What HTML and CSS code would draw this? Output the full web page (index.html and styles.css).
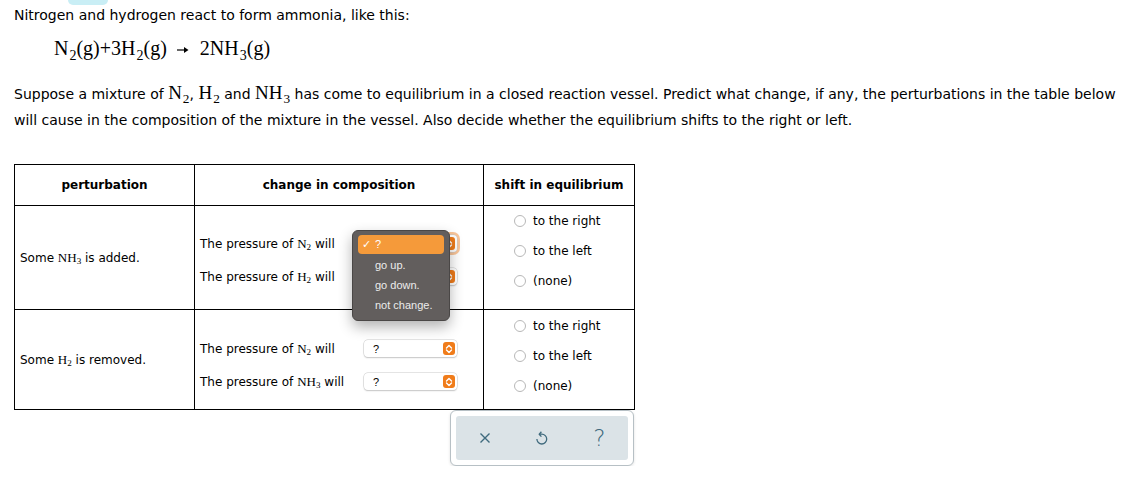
FILE: index.html
```html
<!DOCTYPE html>
<html>
<head>
<meta charset="utf-8">
<link rel="stylesheet" href="styles.css">
</head>
<body>
<div class="page">
  <div class="tab"></div>
  <p class="intro">Nitrogen and hydrogen react to form ammonia, like this:</p>
  <div class="eq">N<sub>2</sub>(g)+3H<sub>2</sub>(g) <svg class="arrow" width="12" height="8" viewBox="0 0 12 8"><path d="M0 4H8" stroke="#000" stroke-width="1.2"/><path d="M7 1L11.5 4L7 7Z" fill="#000"/></svg> 2NH<sub>3</sub>(g)</div>
  <p class="para">Suppose a mixture of <span class="f">N<sub>2</sub></span>, <span class="f">H<sub>2</sub></span> and <span class="f">NH<sub>3</sub></span> has come to equilibrium in a closed reaction vessel. Predict what change, if any, the perturbations in the table below will cause in the composition of the mixture in the vessel. Also decide whether the equilibrium shifts to the right or left.</p>

  <div class="work">
    <table class="grid">
      <colgroup><col class="c1"><col class="c2"><col class="c3"></colgroup>
      <tr class="head">
        <th>perturbation</th>
        <th>change in composition</th>
        <th>shift in equilibrium</th>
      </tr>
      <tr class="r1">
        <td class="pert">Some <span class="fs">NH<sub>3</sub></span> is added.</td>
        <td class="comp">
          <div class="lines">
            <div class="line"><span class="lbl">The pressure of <span class="fs">N<sub>2</sub></span> will</span>
              <span class="selwrap">
                <span class="sel focus"><span class="q">?</span><span class="arr"><svg width="8" height="10" viewBox="0 0 8 10"><path d="M1.5 4L4 1.6L6.5 4M1.5 6L4 8.4L6.5 6" fill="none" stroke="#fff" stroke-width="1.4" stroke-linecap="round" stroke-linejoin="round"/></svg></span></span>
                <span class="menu">
                  <span class="item on"><span class="chk">✓</span>?</span>
                  <span class="item">go up.</span>
                  <span class="item">go down.</span>
                  <span class="item">not change.</span>
                </span>
              </span>
            </div>
            <div class="line"><span class="lbl">The pressure of <span class="fs">H<sub>2</sub></span> will</span>
              <span class="sel"><span class="q">?</span><span class="arr"><svg width="8" height="10" viewBox="0 0 8 10"><path d="M1.5 4L4 1.6L6.5 4M1.5 6L4 8.4L6.5 6" fill="none" stroke="#fff" stroke-width="1.4" stroke-linecap="round" stroke-linejoin="round"/></svg></span></span>
            </div>
          </div>
        </td>
        <td class="shift">
          <div class="radios">
            <label class="radio"><span class="dot"></span>to the right</label>
            <label class="radio"><span class="dot"></span>to the left</label>
            <label class="radio"><span class="dot"></span>(none)</label>
          </div>
        </td>
      </tr>
      <tr class="r2">
        <td class="pert">Some <span class="fs">H<sub>2</sub></span> is removed.</td>
        <td class="comp comp2">
          <div class="lines">
            <div class="line"><span class="lbl">The pressure of <span class="fs">N<sub>2</sub></span> will</span>
              <span class="sel"><span class="q">?</span><span class="arr"><svg width="8" height="10" viewBox="0 0 8 10"><path d="M1.5 4L4 1.6L6.5 4M1.5 6L4 8.4L6.5 6" fill="none" stroke="#fff" stroke-width="1.4" stroke-linecap="round" stroke-linejoin="round"/></svg></span></span>
            </div>
            <div class="line"><span class="lbl">The pressure of <span class="fs">NH<sub>3</sub></span> will</span>
              <span class="sel"><span class="q">?</span><span class="arr"><svg width="8" height="10" viewBox="0 0 8 10"><path d="M1.5 4L4 1.6L6.5 4M1.5 6L4 8.4L6.5 6" fill="none" stroke="#fff" stroke-width="1.4" stroke-linecap="round" stroke-linejoin="round"/></svg></span></span>
            </div>
          </div>
        </td>
        <td class="shift shift2">
          <div class="radios">
            <label class="radio"><span class="dot"></span>to the right</label>
            <label class="radio"><span class="dot"></span>to the left</label>
            <label class="radio"><span class="dot"></span>(none)</label>
          </div>
        </td>
      </tr>
    </table>

    <div class="toolbar">
      <div class="panel">
        <svg class="ico" width="14" height="14" viewBox="0 0 14 14"><path d="M2.5 2.5L11.5 11.5M11.5 2.5L2.5 11.5" stroke="#3f6a7d" stroke-width="1.4" fill="none"/></svg>
        <svg class="ico" width="15" height="17" viewBox="0 0 15 17"><path d="M5.8 4.2H7.8A4.9 4.9 0 1 1 2.9 9.1" stroke="#3f6a7d" stroke-width="1.3" fill="none"/><path d="M7.4 1.8L5.2 4.2L7.4 6.6" stroke="#3f6a7d" stroke-width="1.3" fill="none" stroke-linejoin="round"/></svg>
        <span class="help">?</span>
      </div>
    </div>
  </div>
</div>
</body>
</html>
```
FILE: styles.css
```css
* { box-sizing: border-box; }
body {
  margin: 0;
  background: #fff;
  color: #000;
  font-family: "DejaVu Sans", Verdana, sans-serif;
  font-size: 14px;
}
.page {
  padding: 0 0 0 14px;
  position: relative;
}
.tab {
  width: 40px;
  height: 5px;
  margin-left: 54px;
  background: #c9eef5;
  border-radius: 0 0 8px 8px;
}
.intro {
  margin: 0;
  line-height: 20px;
}
.eq {
  margin: 10px 0 0 40px;
  line-height: 26px;
  height: 26px;
  font-family: "Liberation Serif", "Times New Roman", serif;
  font-size: 20px;
}
.eq sub, .f sub {
  font-size: 70%;
  vertical-align: baseline;
  position: relative;
  top: 5px;
  line-height: 0;
  margin-left: 1px;
}
.f sub { top: 4px; }
.arrow {
  margin: 0 6px 0 5px;
  vertical-align: 1px;
}
.para {
  margin: 20px 0 0;
  line-height: 26px;
  width: 1112px;
}
.f {
  font-family: "Liberation Serif", "Times New Roman", serif;
  font-size: 19px;
  line-height: 1;
}
.fs {
  font-family: "Liberation Serif", "Times New Roman", serif;
  font-size: 13px;
}
.fs sub {
  font-size: 70%;
  vertical-align: baseline;
  position: relative;
  top: 2px;
  line-height: 0;
}
.work {
  margin-top: 31px;
  width: 620px;
  display: flex;
  flex-direction: column;
}
.grid {
  border-collapse: collapse;
  table-layout: fixed;
  width: 620px;
  font-size: 12px;
}
.c1 { width: 180px; }
.c2 { width: 289px; }
.c3 { width: 151px; }
.grid th, .grid td {
  border: 1px solid #000;
  padding: 0;
}
.grid th {
  font-size: 12px;
  font-weight: bold;
  text-align: center;
  vertical-align: middle;
}
.head { height: 41px; }
.r1 { height: 104px; }
.r2 { height: 100px; }
.pert {
  padding-left: 5px !important;
  vertical-align: middle;
}
.comp {
  vertical-align: top;
  padding: 29px 0 0 5px !important;
}
.comp2 {
  padding-top: 30px !important;
}
.lines {
  display: flex;
  flex-direction: column;
  gap: 16px;
}
.line {
  display: flex;
  align-items: center;
  height: 17px;
}
.lbl {
  width: 164px;
  flex: none;
}
.selwrap {
  position: relative;
  display: flex;
}
.sel {
  position: relative;
  width: 93px;
  height: 17px;
  border-radius: 4px;
  background: #fff;
  box-shadow: 0 0 0 0.5px #c9c9c9, 0 1px 1.5px rgba(0,0,0,0.22);
  display: flex;
  align-items: center;
  justify-content: space-between;
  padding: 0 2px 0 9px;
  font-family: "Liberation Sans", Arial, sans-serif;
  font-size: 11px;
}
.sel.focus {
  box-shadow: 0 0 0 0.5px #c9c9c9, 0 0 0 3px rgba(244, 150, 70, 0.55);
}
.arr {
  width: 12px;
  height: 13px;
  border-radius: 3px;
  background: #f07c1a;
  display: flex;
  align-items: center;
  justify-content: center;
}
.menu {
  position: absolute;
  left: -12px;
  top: -5px;
  width: 98px;
  height: 91px;
  background: #625e5d;
  border: 1px solid #4a4746;
  border-radius: 6px;
  box-shadow: 0 6px 14px rgba(0,0,0,0.3);
  padding: 4px 5px;
  display: flex;
  flex-direction: column;
  font-family: "Liberation Sans", Arial, sans-serif;
  font-size: 11px;
  color: #ececec;
  z-index: 5;
}
.item {
  height: 20px;
  line-height: 20px;
  padding-left: 17px;
  position: relative;
  flex: none;
}
.item.on {
  height: 19px;
  line-height: 19px;
  background: #f59a3a;
  border-radius: 4px;
  color: #fff;
  margin-bottom: 1px;
}
.chk {
  position: absolute;
  left: 4px;
  font-size: 11px;
}
.shift {
  vertical-align: top;
  padding: 0 0 0 30px !important;
}
.shift2 {
  padding-top: 1px !important;
}
.radios {
  display: flex;
  flex-direction: column;
}
.radio {
  display: flex;
  align-items: center;
  height: 30px;
  font-size: 12px;
}
.dot {
  width: 12px;
  height: 12px;
  border-radius: 50%;
  border: 1px solid #b8b8b8;
  background: #fff;
  margin-right: 7px;
}
.toolbar {
  align-self: flex-end;
  width: 184px;
  height: 56px;
  border: 1px solid #b7c0c5;
  border-radius: 6px;
  box-shadow: 0 1px 3px rgba(0,0,0,0.12);
  background: #fff;
  padding: 5px;
}
.panel {
  height: 100%;
  background: #dbe3e7;
  border-radius: 3px;
  display: grid;
  grid-template-columns: 1fr 1fr 1fr;
  justify-items: center;
  align-items: center;
}
.help {
  font-family: "DejaVu Sans", sans-serif;
  font-size: 23px;
  font-weight: 200;
  color: #3f6a7d;
  line-height: 1;
}
```
